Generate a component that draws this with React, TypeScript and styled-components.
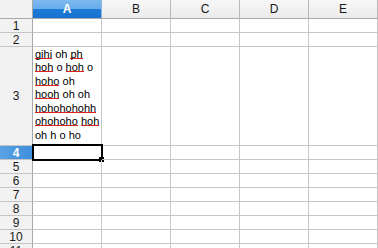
import React from "react";
import styled, { createGlobalStyle, css } from "styled-components";

const Global = createGlobalStyle`
  html, body { margin: 0; padding: 0; background: #ffffff; overflow: hidden; }
  body { font-family: "Liberation Sans", Arial, sans-serif; }
`;

const Sheet = styled.div`
  display: grid;
  grid-template-columns: 33px repeat(5, 69px);
  grid-template-rows: 19px 14px 14px 99px 14px repeat(7, 14px);
  width: 378px;
  height: 248px;
  overflow: hidden;
  background: #ffffff;
`;

const Corner = styled.div`
  box-sizing: border-box;
  background: #f2f2f2;
  border-right: 1px solid #a9a9a9;
  border-bottom: 1px solid #a9a9a9;
`;

const ColHead = styled.div<{ $active?: boolean }>`
  box-sizing: border-box;
  display: flex;
  align-items: center;
  justify-content: center;
  font-size: 12px;
  color: #1a1a1a;
  background: linear-gradient(#f7f7f7, #ebebeb);
  border-right: 1px solid #b9b9b9;
  border-bottom: 1px solid #a9a9a9;
  ${(p) =>
    p.$active &&
    css`
      color: #ffffff;
      font-weight: bold;
      background: linear-gradient(#7db9ee 0%, #68aceb 48%, #1e7ad7 52%, #1672d0 100%);
      border-right-color: #8fb8e0;
    `}
`;

const RowHead = styled.div<{ $active?: boolean }>`
  box-sizing: border-box;
  display: flex;
  align-items: center;
  justify-content: center;
  font-size: 12px;
  color: #1a1a1a;
  background: #f2f2f2;
  border-right: 1px solid #a9a9a9;
  border-bottom: 1px solid #c4c4c4;
  ${(p) =>
    p.$active &&
    css`
      color: #ffffff;
      font-weight: bold;
      background: linear-gradient(90deg, #5aa2e3, #3d8edb);
    `}
`;

const Cell = styled.div`
  position: relative;
  box-sizing: border-box;
  border-right: 1px solid #c6c6c6;
  border-bottom: 1px solid #c6c6c6;
`;

const TextCell = styled(Cell)`
  display: flex;
  flex-direction: column;
  justify-content: flex-end;
  padding: 0 0 3px 2px;
  font-size: 11px;
  line-height: 13.5px;
  color: #000000;
  white-space: nowrap;
`;

const Line = styled.div``;

const Typo = styled.span`
  background-image: linear-gradient(#e0201a, #e0201a);
  background-repeat: no-repeat;
  background-size: 100% 1px;
  background-position: 0 calc(100% - 1px);
`;

const Cursor = styled.div`
  position: absolute;
  left: -1px;
  top: -2px;
  width: 71px;
  height: 17px;
  box-sizing: border-box;
  border: 2px solid #000000;
  pointer-events: none;
`;

const Handle = styled.div`
  position: absolute;
  right: -3px;
  bottom: -3px;
  width: 5px;
  height: 5px;
  background: #000000;
`;

const lines: Array<Array<[string, boolean]>> = [
  [["gihi", true], [" oh ", false], ["ph", true]],
  [["hoh", true], [" o ", false], ["hoh", true], [" o", false]],
  [["hoho", true], [" oh", false]],
  [["hooh", true], [" oh oh", false]],
  [["hohohohohh", true]],
  [["ohohoho", true], [" ", false], ["hoh", true]],
  [["oh h o ho", false]],
];

const cols = ["A", "B", "C", "D", "E"];
const rows = [1, 2, 3, 4, 5, 6, 7, 8, 9, 10, 11];

export default function App() {
  return (
    <>
      <Global />
      <Sheet>
        <Corner />
        {cols.map((c) => (
          <ColHead key={c} $active={c === "A"}>
            {c}
          </ColHead>
        ))}
        {rows.map((r) => (
          <React.Fragment key={r}>
            <RowHead $active={r === 4}>{r}</RowHead>
            {cols.map((c) => {
              if (r === 3 && c === "A") {
                return (
                  <TextCell key={c}>
                    {lines.map((ln, i) => (
                      <Line key={i}>
                        {ln.map(([t, bad], j) =>
                          bad ? <Typo key={j}>{t}</Typo> : <span key={j}>{t}</span>
                        )}
                      </Line>
                    ))}
                  </TextCell>
                );
              }
              if (r === 4 && c === "A") {
                return (
                  <Cell key={c}>
                    <Cursor>
                      <Handle />
                    </Cursor>
                  </Cell>
                );
              }
              return <Cell key={c} />;
            })}
          </React.Fragment>
        ))}
      </Sheet>
    </>
  );
}
